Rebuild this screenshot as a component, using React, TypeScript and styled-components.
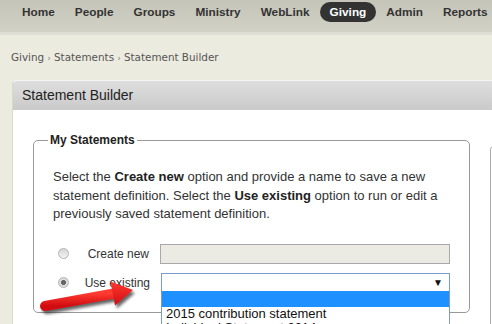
import styled, { createGlobalStyle } from "styled-components";

const GlobalStyle = createGlobalStyle`
  body {
    margin: 0;
    background: #ecebe0;
    font-family: "Liberation Sans", Arial, sans-serif;
    overflow: hidden;
  }
`;

const navItems = ["Home", "People", "Groups", "Ministry", "WebLink", "Giving", "Admin", "Reports"];

export default function App() {
  return (
    <Page>
      <GlobalStyle />
      <NavBar>
        {navItems.map((n) => (
          <NavItem key={n} $active={n === "Giving"}>{n}</NavItem>
        ))}
      </NavBar>

      <Breadcrumb>
        Giving <Sep>›</Sep> Statements <Sep>›</Sep> Statement Builder
      </Breadcrumb>

      <Panel>
        <PanelHeader>Statement Builder</PanelHeader>
        <PanelBody>
          <Fieldset>
            <Legend>My Statements</Legend>
            <Intro>
              Select the <b>Create new</b> option and provide a name to save a new statement definition. Select the{" "}
              <b>Use existing</b> option to run or edit a previously saved statement definition.
            </Intro>
            <Options>
              <OptionRow>
                <RadioCell><Radio /></RadioCell>
                <OptionLabel>Create new</OptionLabel>
                <TextInput />
              </OptionRow>
              <OptionRow>
                <RadioCell><Radio $checked /></RadioCell>
                <OptionLabel>Use existing</OptionLabel>
                <Select>
                  <Caret>▼</Caret>
                  <DropList>
                    <DropOption $selected>&nbsp;</DropOption>
                    <DropOption>2015 contribution statement</DropOption>
                    <DropOption>Individual Statement 2014</DropOption>
                  </DropList>
                </Select>
              </OptionRow>
            </Options>
          </Fieldset>
          <SideBox />
        </PanelBody>
      </Panel>

      <Arrow viewBox="34 276 106 42" width="106" height="42">
        <defs>
          <filter id="blur" x="-20%" y="-50%" width="140%" height="200%">
            <feGaussianBlur stdDeviation="1.6" />
          </filter>
          <linearGradient id="red" x1="0" y1="0" x2="0" y2="1">
            <stop offset="0" stopColor="#ff3a30" />
            <stop offset="1" stopColor="#d00c10" />
          </linearGradient>
        </defs>
        <g transform="translate(2 3)" filter="url(#blur)" fill="#333" stroke="#333" opacity="0.75">
          <line x1="45" y1="306" x2="114" y2="293.5" strokeWidth="10" strokeLinecap="round" />
          <polygon points="110.5,281.5 133,290 115,305.5" strokeWidth="0" />
        </g>
        <g fill="url(#red)" stroke="url(#red)">
          <line x1="45" y1="306" x2="114" y2="293.5" strokeWidth="10" strokeLinecap="round" />
          <polygon points="110.5,281.5 133,290 115,305.5" strokeWidth="0" />
        </g>
      </Arrow>
    </Page>
  );
}

const Page = styled.div`
  position: relative;
  width: 492px;
  height: 324px;
  overflow: hidden;
`;

const NavBar = styled.nav`
  display: flex;
  align-items: flex-start;
  height: 30px;
  padding: 2px 0 0 12px;
  background: linear-gradient(#c5c4b8, #d2d1c5);
  border-bottom: 3px solid #dfded4;
  white-space: nowrap;
`;

const NavItem = styled.span<{ $active?: boolean }>`
  padding: 0 10px;
  height: 20px;
  line-height: 20px;
  border-radius: 10px;
  font-size: 11.8px;
  font-weight: bold;
  color: ${(p) => (p.$active ? "#fff" : "#333")};
  background: ${(p) => (p.$active ? "#333" : "transparent")};
`;

const Breadcrumb = styled.div`
  padding: 15px 11px 0;
  font-family: "DejaVu Sans", Verdana, sans-serif;
  font-size: 10.4px;
  line-height: 14px;
  color: #555;
`;

const Sep = styled.span`
  font-size: 8px;
  color: #777;
`;

const Panel = styled.section`
  margin: 14px 0 0 12px;
  width: 560px;
  background: #fff;
  border-left: 1px solid #d8d8d0;
  border-top-left-radius: 4px;
  height: 260px;
`;

const PanelHeader = styled.h2`
  margin: 0;
  height: 29px;
  line-height: 29px;
  padding-left: 9px;
  border-top: 1px solid #f4f4f4;
  border-top-left-radius: 4px;
  background: linear-gradient(#dedede, #cacaca);
  font-size: 14px;
  font-weight: normal;
  color: #222;
`;

const PanelBody = styled.div`
  display: grid;
  grid-template-columns: 437px 1fr;
  column-gap: 20px;
  align-items: start;
  padding: 23px 0 0 20px;
`;

const Fieldset = styled.fieldset`
  margin: 0;
  min-width: 0;
  box-sizing: border-box;
  width: 437px;
  border: 1px solid #999;
  border-radius: 5px;
  padding: 0 19px 19px;
`;

const Legend = styled.legend`
  margin-left: -5px;
  padding: 0 2px;
  font-size: 12px;
  font-weight: bold;
  line-height: 15px;
  color: #222;
`;

const Intro = styled.p`
  margin: 20px 0 0;
  font-size: 13px;
  line-height: 18.5px;
  color: #333;
  b {
    color: #222;
  }
`;

const Options = styled.div`
  display: flex;
  flex-direction: column;
  gap: 9px;
  margin-top: 20px;
`;

const OptionRow = styled.div`
  display: flex;
  align-items: center;
  height: 20px;
`;

const RadioCell = styled.div`
  width: 22px;
  display: flex;
  padding-left: 5px;
  box-sizing: border-box;
`;

const Radio = styled.span<{ $checked?: boolean }>`
  width: 11px;
  height: 11px;
  box-sizing: border-box;
  border-radius: 50%;
  border: 1px solid #b4b4b4;
  background: ${(p) =>
    p.$checked
      ? "radial-gradient(circle, #666 0 2.2px, #dcdcdc 2.8px)"
      : "linear-gradient(#d6d6d6, #f2f2f2)"};
`;

const OptionLabel = styled.span`
  width: 75px;
  text-align: right;
  font-size: 12px;
  color: #333;
`;

const TextInput = styled.div`
  margin-left: 11px;
  width: 293px;
  height: 20px;
  box-sizing: border-box;
  border: 1px solid #a9a9a9;
  background: #ebeae3;
`;

const Select = styled.div`
  position: relative;
  margin-left: 11px;
  width: 289px;
  height: 19px;
  box-sizing: border-box;
  border: 1px solid #7a9cd3;
  background: #fff;
`;

const Caret = styled.span`
  position: absolute;
  right: 6px;
  top: 3px;
  font-size: 10px;
  color: #111;
`;

const DropList = styled.div`
  position: absolute;
  top: 100%;
  left: -1px;
  right: -1px;
  z-index: 2;
  background: #fff;
  border: 1px solid #7f9db9;
  border-top: none;
`;

const DropOption = styled.div<{ $selected?: boolean }>`
  height: ${(p) => (p.$selected ? "16px" : "14px")};
  line-height: 14px;
  padding-left: 4px;
  font-size: 13px;
  color: #111;
  white-space: nowrap;
  background: ${(p) => (p.$selected ? "#1e90ff" : "#fff")};
`;

const SideBox = styled.div`
  margin-top: 12px;
  height: 200px;
  border: 1px solid #aaa;
  border-radius: 5px;
`;

const Arrow = styled.svg`
  position: absolute;
  left: 34px;
  top: 276px;
  z-index: 3;
  overflow: visible;
`;
